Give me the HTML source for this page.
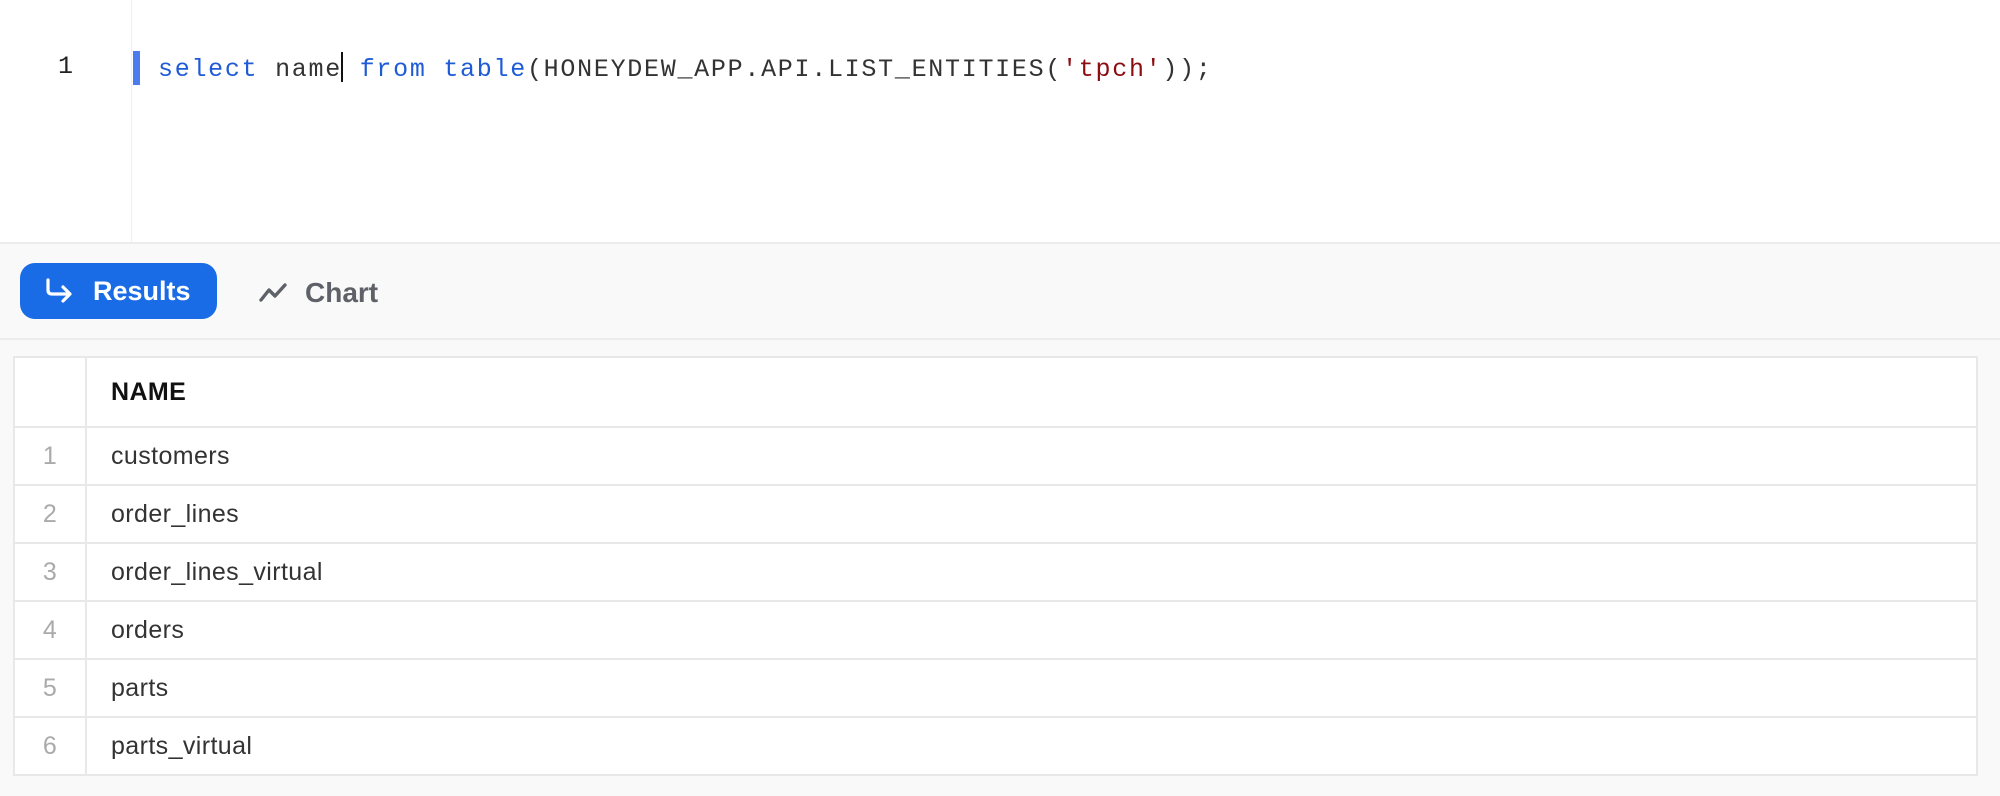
<!DOCTYPE html>
<html><head><style>
body{margin:0;width:2000px;height:796px;background:#f9f9f9;position:relative;overflow:hidden;font-family:"Liberation Sans",sans-serif}
.ed{position:absolute;left:0;top:0;width:2000px;height:242px;background:#fff;border-bottom:2px solid #ececec}
.gut{position:absolute;left:131px;top:0;width:1px;height:242px;background:#f0f0f0}
.ln{position:absolute;left:58px;top:52px;font:25px "Liberation Mono",monospace;color:#222}
.bar{position:absolute;left:133px;top:51px;width:7px;height:34px;background:#4a7cf0}
.code{position:absolute;left:158px;top:52px;font:25px "Liberation Mono",monospace;letter-spacing:1.72px;color:#333;white-space:pre}
.k{color:#1f5bd6}.s{color:#8b0d12}
.cur{display:inline-block;width:2px;height:30px;background:#111;vertical-align:-6px;margin-left:-1px}
.btn{position:absolute;left:20px;top:263px;width:197px;height:56px;background:#1a6ce6;border-radius:15px;color:#fff;font-weight:bold;font-size:27px}
.btn span{position:absolute;left:73px;top:13px}
.ch{position:absolute;left:305px;top:277px;font-weight:bold;font-size:28px;color:#5e6268}
.tb{position:absolute;left:0;top:338px;width:2000px;height:2px;background:#ececec}
table{position:absolute;left:13px;top:356px;width:1965px;border-collapse:collapse;background:#fff;font-size:25px;letter-spacing:0.4px;color:#333}
td{border:2px solid #e8e8e8;height:56px;padding:0}
td.i{width:70px;text-align:center;color:#aaa}
td.n{padding-left:24px}
tr.h td{height:68px;font-weight:bold;color:#111}
</style></head><body>
<div class="ed"><div class="gut"></div>
<div class="ln">1</div><div class="bar"></div>
<div class="code"><span class="k">select</span> name<span class="cur"></span> <span class="k">from</span> <span class="k">table</span>(HONEYDEW_APP.API.LIST_ENTITIES(<span class="s">'tpch'</span>));</div>
</div>
<div class="btn"><svg style="position:absolute;left:24px;top:15px" width="30" height="26" viewBox="0 0 30 26"><path d="M4 2 V12 Q4 16 8 16 H25 M19 9 L26 16 L19 23" fill="none" stroke="#fff" stroke-width="3.2" stroke-linecap="round" stroke-linejoin="round"/></svg><span>Results</span></div>
<svg style="position:absolute;left:258px;top:280px" width="30" height="24" viewBox="0 0 30 24"><path d="M3 20 L11 10 L17 16 L27 5" fill="none" stroke="#5e6268" stroke-width="3.4" stroke-linecap="round" stroke-linejoin="round"/></svg>
<div class="ch">Chart</div>
<div class="tb"></div>
<table>
<tr class="h"><td class="i"></td><td class="n">NAME</td></tr>
<tr><td class="i">1</td><td class="n">customers</td></tr>
<tr><td class="i">2</td><td class="n">order_lines</td></tr>
<tr><td class="i">3</td><td class="n">order_lines_virtual</td></tr>
<tr><td class="i">4</td><td class="n">orders</td></tr>
<tr><td class="i">5</td><td class="n">parts</td></tr>
<tr><td class="i">6</td><td class="n">parts_virtual</td></tr>
</table>
</body></html>
